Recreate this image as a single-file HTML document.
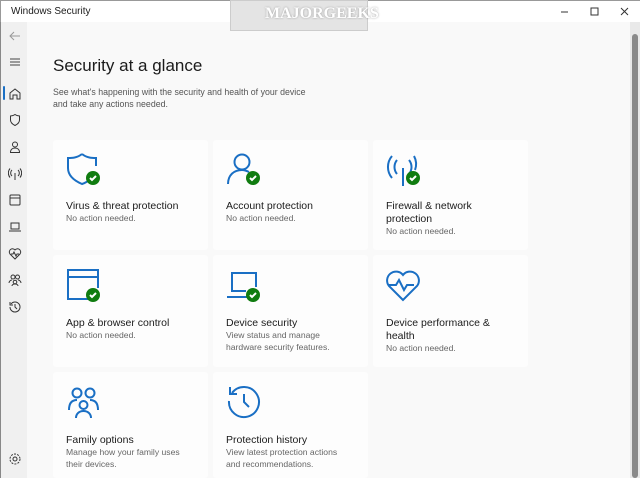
<!DOCTYPE html>
<html><head><style>
*{margin:0;padding:0;box-sizing:border-box}
body{width:640px;height:478px;overflow:hidden;background:#f9f9f9;font-family:"Liberation Sans",sans-serif;position:relative;color:#1b1b1b}
.tb{position:absolute;left:0;top:0;width:640px;height:22px;background:#fff;border-top:1px solid #999;border-left:1px solid #999}
.tb .t{position:absolute;left:10px;top:5px;font-size:10px}
.side{position:absolute;left:0;top:22px;width:27px;height:456px;background:#f0f0f0;border-left:1px solid #888}
.ic{position:absolute;left:7px;width:14px;height:14px}
.sb{position:absolute;left:630px;top:22px;width:10px;height:456px;background:#e9e9e9}
.sb div{position:absolute;left:2px;top:12px;width:6px;height:444px;background:#8a8a8a;border-radius:3px}
h1{position:absolute;left:53px;top:56px;font-size:17px;font-weight:normal}
.sub{position:absolute;left:53px;top:86px;font-size:8.8px;color:#555;line-height:12px}
.c{position:absolute;width:155px;background:#fdfdfd;border-radius:3px}
.c svg{position:absolute;left:13px;top:12px}
.c .h{position:absolute;left:13px;top:60px;font-size:10.5px;line-height:13px;width:118px}
.c .s{font-size:8.6px;color:#666;line-height:11.5px;width:112px}
.wm{position:absolute;left:230px;top:0;width:138px;height:31px;background:#e4e4e4;border:1px solid #ccc;color:#fff;font:bold 16px "Liberation Serif",serif;padding:4px 0 0 34px;text-shadow:0 0 2px #999}
</style></head><body>
<div class="tb"><span class="t">Windows Security</span>
<svg style="position:absolute;left:560px;top:6px" width="72" height="10"><line x1="0" y1="5" x2="7" y2="5" stroke="#333"/><rect x="30" y="1" width="7" height="7" fill="none" stroke="#333"/><path d="M60 1l7 7M67 1l-7 7" stroke="#333"/></svg></div>
<div class="wm">MAJORGEEKS</div>
<div class="side">
<svg class="ic" style="top:7px" viewBox="0 0 14 14"><path d="M12 7H2M6 3L2 7l4 4" fill="none" stroke="#999"/></svg>
<svg class="ic" style="top:33px" viewBox="0 0 14 14"><path d="M2 4h10M2 7h10M2 10h10" stroke="#444"/></svg>
<div style="position:absolute;left:2px;top:64px;width:2px;height:14px;background:#1a6fc4;border-radius:1px"></div>
<svg class="ic" style="top:65px" viewBox="0 0 14 14"><path d="M2 12V6l5-4 5 4v6H9V8H5v4z" fill="none" stroke="#333"/></svg>
<svg class="ic" style="top:91px" viewBox="0 0 14 14"><path d="M7 1.5C5 3 3.5 3 2.5 3v4c0 3 2.5 4.5 4.5 5.5 2-1 4.5-2.5 4.5-5.5V3C10.5 3 9 3 7 1.5z" fill="none" stroke="#333"/></svg>
<svg class="ic" style="top:118px" viewBox="0 0 14 14"><circle cx="7" cy="4.5" r="2.5" fill="none" stroke="#333"/><path d="M2.5 12.5c0-3 2-4.5 4.5-4.5s4.5 1.5 4.5 4.5z" fill="none" stroke="#333"/></svg>
<svg class="ic" style="top:145px" viewBox="0 0 14 14"><path d="M7 6v7M4 3a4 4 0 000 6M10 3a4 4 0 010 6M2 1.5a7 7 0 000 9M12 1.5a7 7 0 010 9" fill="none" stroke="#333"/></svg>
<svg class="ic" style="top:171px" viewBox="0 0 14 14"><rect x="2" y="2" width="10" height="10" rx="1" fill="none" stroke="#333"/><path d="M2 5h10" stroke="#333"/></svg>
<svg class="ic" style="top:198px" viewBox="0 0 14 14"><rect x="3" y="3" width="8" height="6" fill="none" stroke="#333"/><path d="M1 11h12" stroke="#333"/></svg>
<svg class="ic" style="top:225px" viewBox="0 0 14 14"><path d="M7 12L2 7a3 3 0 015-4 3 3 0 015 4z M3 7h2l1-2 2 4 1-2h2" fill="none" stroke="#333"/></svg>
<svg class="ic" style="top:251px" viewBox="0 0 14 14"><circle cx="5" cy="4" r="2" fill="none" stroke="#333"/><circle cx="9.5" cy="4" r="2" fill="none" stroke="#333"/><circle cx="7" cy="9" r="1.8" fill="none" stroke="#333"/><path d="M1 10c0-2 2-3 3-3M13 10c0-2-2-3-3-3M4 13c0-1 1-2 3-2s3 1 3 2" fill="none" stroke="#333"/></svg>
<svg class="ic" style="top:278px" viewBox="0 0 14 14"><path d="M3 4a5 5 0 11-1 3M2 2v3h3M7 4v3l2 2" fill="none" stroke="#333"/></svg>
<svg class="ic" style="top:430px" viewBox="0 0 14 14"><circle cx="7" cy="7" r="2" fill="none" stroke="#333"/><circle cx="7" cy="7" r="5" fill="none" stroke="#333" stroke-dasharray="2 1.2"/></svg>
</div>
<div class="sb"><div></div></div>
<h1>Security at a glance</h1>
<div class="sub">See what's happening with the security and health of your device<br>and take any actions needed.</div>

<div class="c" style="left:53px;top:140px;height:110px"><svg width="40" height="40" viewBox="0 0 40 40"><path d="M16 2C11 6 6 6 2 6v10c0 8 7 13 14 16 3-1 5-2 7-4" fill="none" stroke="#1a6fc4" stroke-width="2"/><path d="M16 2c5 4 10 4 14 4v8" fill="none" stroke="#1a6fc4" stroke-width="2"/><circle cx="27" cy="26" r="7" fill="#107c10"/><path d="M24 26l2 2 4-4" fill="none" stroke="#fff" stroke-width="2"/></svg><div class="h">Virus &amp; threat protection<div class="s">No action needed.</div></div></div>
<div class="c" style="left:213px;top:140px;height:110px"><svg width="40" height="40" viewBox="0 0 40 40"><circle cx="16" cy="10" r="7.5" fill="none" stroke="#1a6fc4" stroke-width="2"/><path d="M2 32c0-9 6-14 14-14 3 0 5 1 7 2" fill="none" stroke="#1a6fc4" stroke-width="2"/><circle cx="27" cy="26" r="7" fill="#107c10"/><path d="M24 26l2 2 4-4" fill="none" stroke="#fff" stroke-width="2"/></svg><div class="h">Account protection<div class="s">No action needed.</div></div></div>
<div class="c" style="left:373px;top:140px;height:110px"><svg width="40" height="40" viewBox="0 0 40 40"><path d="M17 16v18M11 8a11 11 0 000 14M23 8a11 11 0 010 14M6 4a17 17 0 000 22M28 4a17 17 0 011 14" fill="none" stroke="#1a6fc4" stroke-width="2"/><circle cx="27" cy="26" r="7" fill="#107c10"/><path d="M24 26l2 2 4-4" fill="none" stroke="#fff" stroke-width="2"/></svg><div class="h">Firewall &amp; network protection<div class="s">No action needed.</div></div></div>

<div class="c" style="left:53px;top:255px;height:112px"><svg width="40" height="40" viewBox="0 0 40 40"><path d="M22 32H2V3h30v18M2 10h30" fill="none" stroke="#1a6fc4" stroke-width="2"/><circle cx="27" cy="28" r="7" fill="#107c10"/><path d="M24 28l2 2 4-4" fill="none" stroke="#fff" stroke-width="2"/></svg><div class="h" style="top:62px">App &amp; browser control<div class="s">No action needed.</div></div></div>
<div class="c" style="left:213px;top:255px;height:112px"><svg width="40" height="40" viewBox="0 0 40 40"><path d="M20 24H6V6h24v14M1 30h20" fill="none" stroke="#1a6fc4" stroke-width="2"/><circle cx="27" cy="28" r="7" fill="#107c10"/><path d="M24 28l2 2 4-4" fill="none" stroke="#fff" stroke-width="2"/></svg><div class="h" style="top:62px">Device security<div class="s">View status and manage hardware security features.</div></div></div>
<div class="c" style="left:373px;top:255px;height:112px"><svg width="40" height="40" viewBox="0 0 40 40"><path d="M17 33L3 19a8 8 0 0114-11 8 8 0 0114 11zM3 18h7l3-5 5 10 3-5h7" fill="none" stroke="#1a6fc4" stroke-width="2"/></svg><div class="h" style="top:62px">Device performance &amp; health<div class="s">No action needed.</div></div></div>

<div class="c" style="left:53px;top:372px;height:106px"><svg width="40" height="40" viewBox="0 0 40 40"><circle cx="11" cy="9" r="4.5" fill="none" stroke="#1a6fc4" stroke-width="2"/><circle cx="24" cy="9" r="4.5" fill="none" stroke="#1a6fc4" stroke-width="2"/><circle cx="17.5" cy="21" r="4" fill="none" stroke="#1a6fc4" stroke-width="2"/><path d="M3 26c0-7 3-10 8-10M32 26c0-7-3-10-8-10M10 34c0-4 3-7 7.5-7s7.5 3 7.5 7" fill="none" stroke="#1a6fc4" stroke-width="2"/></svg><div class="h" style="top:62px">Family options<div class="s" style="width:125px">Manage how your family uses their devices.</div></div></div>
<div class="c" style="left:213px;top:372px;height:106px"><svg width="40" height="40" viewBox="0 0 40 40"><path d="M6 9a15 15 0 11-3 8M4 3v7h7M18 10v8l5 5" fill="none" stroke="#1a6fc4" stroke-width="2"/></svg><div class="h" style="top:62px">Protection history<div class="s" style="width:125px">View latest protection actions and recommendations.</div></div></div>
</body></html>
